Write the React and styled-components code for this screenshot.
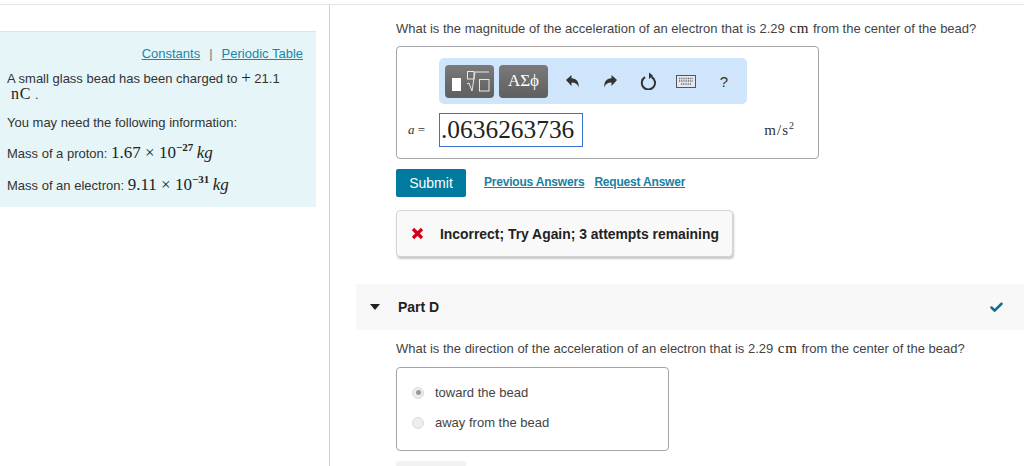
import React from 'react';
import styled, { createGlobalStyle } from 'styled-components';
import { Check } from 'lucide-react';

const GlobalStyle = createGlobalStyle`
	html, body {
		margin: 0;
		padding: 0;
		background: #fff;
		overflow: hidden;
	}
	body {
		font-family: 'Liberation Sans', Arial, sans-serif;
		color: #333;
	}
`;

const Page = styled.div`
	width: 1024px;
	height: 466px;
	overflow: hidden;
	display: flex;
	flex-direction: column;
	padding-top: 4px;
	box-sizing: border-box;
`;

const TopRule = styled.div`
	height: 1px;
	background: #e2e4e6;
	flex: none;
`;

const Columns = styled.div`
	flex: 1;
	display: flex;
	min-height: 0;
`;

const Sidebar = styled.aside`
	width: 330px;
	flex: none;
	box-sizing: border-box;
	border-right: 1px solid #cdd3da;
	padding: 26px 13px 0 0;
`;

const InfoPanel = styled.div`
	height: 176px;
	box-sizing: border-box;
	background: #e6f5f7;
	border-top: 1px solid #dfe5e6;
	padding: 14px 13px 0 7px;
	font-size: 13px;
	line-height: 15px;
`;

const ResourceLinks = styled.div`
	display: flex;
	justify-content: flex-end;
	align-items: center;
	gap: 9px;
	color: #777;
	margin-bottom: 9px;
`;

const TealLink = styled.a`
	color: #1a87a8;
	text-decoration: underline;
`;

const ActionLink = styled(TealLink)`
	color: #1a7fa0;
	font-weight: 700;
	letter-spacing: -0.2px;
`;

const InfoLine = styled.div`
	margin-bottom: ${(p) => p.$gap || 0}px;
	height: ${(p) => p.$height || 15}px;
	white-space: nowrap;
`;

const MathText = styled.span`
	font-family: 'Liberation Serif', 'DejaVu Serif', serif;
	font-size: ${(p) => p.$size || 17}px;
	font-style: ${(p) => (p.$italic ? 'italic' : 'normal')};
	letter-spacing: ${(p) => p.$spacing || 0}px;
	margin-left: ${(p) => p.$indent || 0}px;
	color: #222;
`;

const Exponent = styled.sup`
	font-family: 'Liberation Serif', 'DejaVu Serif', serif;
	font-size: 11px;
	line-height: 0;
	vertical-align: 7px;
	font-weight: 700;
	color: #222;
`;

const Main = styled.main`
	flex: 1;
	min-width: 0;
	padding: 14px 0 0 26px;
`;

const PartBody = styled.div`
	padding-left: 40px;
`;

const Question = styled.p`
	margin: ${(p) => p.$top || 0}px 0 0;
	height: 18px;
	font-size: 13px;
	line-height: 18px;
	color: #444;
	white-space: nowrap;
`;

const AnswerBox = styled.div`
	width: 423px;
	height: 113px;
	margin-top: 9px;
	box-sizing: border-box;
	border: 1px solid #a4a4a4;
	border-radius: 4px;
	padding: 11px 10px 0 11px;
`;

const Toolbar = styled.div`
	width: 308px;
	height: 46px;
	margin-left: 31px;
	box-sizing: border-box;
	background: #cfe5fb;
	border-radius: 5px;
	display: flex;
	align-items: center;
	padding-left: 6px;
`;

const PaletteButton = styled.div`
	width: 49px;
	height: 33px;
	margin-right: 5px;
	border-radius: 4px;
	background: linear-gradient(#7a7a7a, #5f5f5f);
	color: #fff;
	display: flex;
	align-items: center;
	justify-content: center;
	font-family: 'Liberation Serif', serif;
	font-size: 17px;
`;

const ToolIcon = styled.div`
	width: 38px;
	display: flex;
	justify-content: center;
	align-items: center;
	color: #333;
	font-size: 15px;
`;

const AnswerRow = styled.div`
	display: flex;
	align-items: center;
	margin-top: 9px;
`;

const VarLabel = styled.span`
	width: 31px;
	font-family: 'Liberation Serif', serif;
	font-size: 13px;
	color: #333;
	white-space: nowrap;
`;

const AnswerInput = styled.div`
	width: 144px;
	height: 34px;
	box-sizing: border-box;
	border: 1px solid #3b73d4;
	font-family: 'Liberation Serif', serif;
	font-size: 25.4px;
	line-height: 31px;
	padding-left: 1px;
	color: #222;
`;

const Units = styled.span`
	margin-left: auto;
	margin-right: 14px;
	font-family: 'Liberation Serif', serif;
	font-size: 15px;
	letter-spacing: 1px;
	color: #333;
`;

const UnitExponent = styled.sup`
	font-size: 10px;
	line-height: 0;
	vertical-align: 6px;
	letter-spacing: 0;
`;

const ActionRow = styled.div`
	display: flex;
	align-items: center;
	margin-top: 10px;
	font-size: 12px;
`;

const SubmitButton = styled.button`
	width: 70px;
	height: 28px;
	border: 0;
	border-radius: 2px;
	background: #007a9e;
	color: #fff;
	font: 14px 'Liberation Sans', Arial, sans-serif;
	margin-right: 18px;
	padding: 0;
`;

const ActionLinks = styled.div`
	display: flex;
	gap: 10px;
	margin-top: -2px;
`;

const Feedback = styled.div`
	width: 337px;
	height: 47px;
	margin-top: 13px;
	box-sizing: border-box;
	background: #f9f9f9;
	border: 1px solid #d4d4d4;
	border-radius: 4px;
	box-shadow: 1px 2px 2px rgba(0, 0, 0, 0.22);
	display: flex;
	align-items: center;
	padding-left: 14px;
	gap: 16px;
	font-size: 13.9px;
	font-weight: 700;
	color: #222;
	white-space: nowrap;
`;

const PartHeader = styled.div`
	height: 46px;
	margin-top: 27px;
	background: #f8f8f8;
	display: flex;
	align-items: center;
	padding: 0 20px 0 14px;
	font-size: 14px;
	font-weight: 700;
	color: #222;
`;

const Caret = styled.span`
	width: 0;
	height: 0;
	border-left: 5px solid transparent;
	border-right: 5px solid transparent;
	border-top: 6px solid #222;
	margin-right: 18px;
`;

const HeaderCheck = styled.span`
	margin-left: auto;
	display: flex;
	color: #0f6e8c;
`;

const ChoiceBox = styled.div`
	width: 273px;
	height: 84px;
	margin-top: 10px;
	box-sizing: border-box;
	border: 1px solid #a4a4a4;
	border-radius: 4px;
	padding: 17px 15px 0;
	display: flex;
	flex-direction: column;
	gap: 15px;
`;

const Choice = styled.label`
	display: flex;
	align-items: center;
	gap: 11px;
	height: 15px;
	font-size: 13px;
	color: #444;
`;

const Radio = styled.span`
	width: 12px;
	height: 12px;
	box-sizing: border-box;
	border-radius: 50%;
	background: #eceeee;
	border: 1px solid #d8dcdc;
	display: flex;
	align-items: center;
	justify-content: center;
	&::after {
		content: '';
		width: 5px;
		height: 5px;
		border-radius: 50%;
		background: ${(p) => (p.$checked ? '#9a9a9a' : 'transparent')};
	}
`;

const DisabledButton = styled.div`
	width: 70px;
	height: 28px;
	margin-top: 10px;
	background: #f2f2f2;
	border-radius: 2px;
`;

const TemplatesIcon = () => (
	<svg width="49" height="33" viewBox="0 0 49 33" fill="none">
		<rect x="7" y="13" width="9" height="13" fill="#fff" />
		<rect x="22.5" y="6.5" width="6.5" height="7.5" stroke="#e8e8e8" />
		<path d="M22 19l2-1 3 8 3-19h14" stroke="#e8e8e8" />
		<rect x="34.5" y="14.5" width="9.5" height="11.5" stroke="#e8e8e8" />
	</svg>
);

const ArrowIcon = styled.svg`
	transform: ${(p) => (p.$flip ? 'scaleX(-1)' : 'none')};
`;

const UndoIcon = ({ flip }) => (
	<ArrowIcon $flip={flip} width="15" height="15" viewBox="0 0 15 15">
		<path d="M1 6l5.5-5v3.2c5 .2 7.5 3.4 7.2 9.3-1-3.4-3.2-5-7.2-5V12z" fill="#333" />
	</ArrowIcon>
);

const ResetIcon = () => (
	<svg width="17" height="18" viewBox="0 0 17 18" fill="none">
		<path d="M5 5.2a6.6 6.6 0 1 0 6.5-.2" stroke="#333" strokeWidth="2" />
		<path d="M9 0.5v6.5l4-3.2z" fill="#333" />
	</svg>
);

const KeyboardIcon = () => (
	<svg width="20" height="13" viewBox="0 0 20 13">
		<rect x="0.5" y="0.5" width="19" height="12" fill="#e4e8ee" stroke="#555" />
		<path d="M3 3.5h14M3 6h14M5 9h10" stroke="#666" strokeWidth="1.4" strokeDasharray="1 .8" />
	</svg>
);

const CrossIcon = () => (
	<svg width="13" height="13" viewBox="0 0 13 13">
		<path d="M2 2l9 9M11 2l-9 9" stroke="#d0021b" strokeWidth="3.2" />
	</svg>
);

export default function App() {
	return (
		<>
			<GlobalStyle />
			<Page>
				<TopRule />
				<Columns>
					<Sidebar>
						<InfoPanel>
							<ResourceLinks>
								<TealLink>Constants</TealLink>|<TealLink>Periodic Table</TealLink>
							</ResourceLinks>
							<InfoLine $height={16}>
								A small glass bead has been charged to <MathText>+</MathText> 21.1
							</InfoLine>
							<InfoLine $gap={14}>
								<MathText $size={16} $spacing={0.8} $indent={4}>nC</MathText> .
							</InfoLine>
							<InfoLine $gap={15}>You may need the following information:</InfoLine>
							<InfoLine $gap={15} $height={17}>
								Mass of a proton: <MathText>1.67 × 10</MathText>
								<Exponent>−27</Exponent> <MathText $italic>kg</MathText>
							</InfoLine>
							<InfoLine $height={17}>
								Mass of an electron: <MathText>9.11 × 10</MathText>
								<Exponent>−31</Exponent> <MathText $italic>kg</MathText>
							</InfoLine>
						</InfoPanel>
					</Sidebar>
					<Main>
						<PartBody>
							<Question>
								What is the magnitude of the acceleration of an electron that is 2.29 <MathText $size={15} $spacing={0.8} $indent={1}>cm</MathText> from the center of the bead?
							</Question>
							<AnswerBox>
								<Toolbar>
									<PaletteButton><TemplatesIcon /></PaletteButton>
									<PaletteButton>ΑΣϕ</PaletteButton>
									<ToolIcon><UndoIcon /></ToolIcon>
									<ToolIcon><UndoIcon flip /></ToolIcon>
									<ToolIcon><ResetIcon /></ToolIcon>
									<ToolIcon><KeyboardIcon /></ToolIcon>
									<ToolIcon>?</ToolIcon>
								</Toolbar>
								<AnswerRow>
									<VarLabel><i>a</i> =</VarLabel>
									<AnswerInput>.0636263736</AnswerInput>
									<Units>m/s<UnitExponent>2</UnitExponent></Units>
								</AnswerRow>
							</AnswerBox>
							<ActionRow>
								<SubmitButton>Submit</SubmitButton>
								<ActionLinks>
									<ActionLink>Previous Answers</ActionLink>
									<ActionLink>Request Answer</ActionLink>
								</ActionLinks>
							</ActionRow>
							<Feedback>
								<CrossIcon />
								Incorrect; Try Again; 3 attempts remaining
							</Feedback>
						</PartBody>
						<PartHeader>
							<Caret />
							Part D
							<HeaderCheck><Check size={15} strokeWidth={4} /></HeaderCheck>
						</PartHeader>
						<PartBody>
							<Question $top={9}>
								What is the direction of the acceleration of an electron that is 2.29 <MathText $size={15} $spacing={0.8} $indent={1}>cm</MathText> from the center of the bead?
							</Question>
							<ChoiceBox>
								<Choice><Radio $checked />toward the bead</Choice>
								<Choice><Radio />away from the bead</Choice>
							</ChoiceBox>
							<DisabledButton />
						</PartBody>
					</Main>
				</Columns>
			</Page>
		</>
	);
}
